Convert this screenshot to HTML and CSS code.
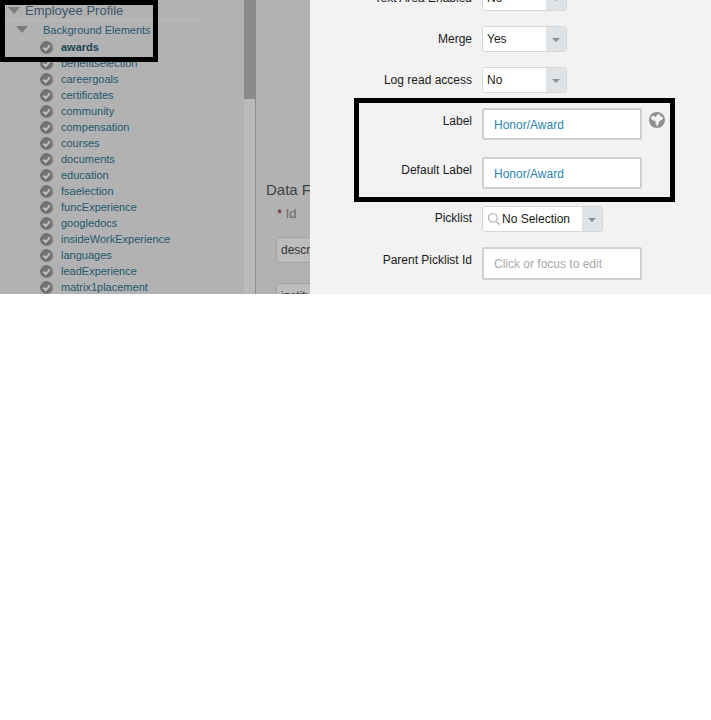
FILE: index.html
```html
<!DOCTYPE html>
<html lang="en">
<head>
    <meta charset="UTF-8">
    <title>Employee Profile</title>
    <link rel="stylesheet" href="styles.css">
</head>
<body>
    <svg class="defs" width="0" height="0">
        <symbol id="check" viewBox="0 0 14 14">
            <circle cx="7" cy="7" r="7" fill="#737373"/>
            <path d="M3.6 7.2 6.2 9.8 10.6 4.8" fill="none" stroke="#c4c4c4" stroke-width="2"/>
        </symbol>
    </svg>
    <div class="shot">
        <div class="left">
            <div class="tree">
                <div class="section">
                    <span class="tri"></span>
                    <span>Employee Profile</span>
                </div>
                <div class="group">
                    <span class="tri"></span>
                    <span>Background Elements</span>
                </div>
                <ul class="items">
                    <li class="active"><svg class="check"><use href="#check"/></svg>awards</li>
                    <li><svg class="check"><use href="#check"/></svg>benefitselection</li>
                    <li><svg class="check"><use href="#check"/></svg>careergoals</li>
                    <li><svg class="check"><use href="#check"/></svg>certificates</li>
                    <li><svg class="check"><use href="#check"/></svg>community</li>
                    <li><svg class="check"><use href="#check"/></svg>compensation</li>
                    <li><svg class="check"><use href="#check"/></svg>courses</li>
                    <li><svg class="check"><use href="#check"/></svg>documents</li>
                    <li><svg class="check"><use href="#check"/></svg>education</li>
                    <li><svg class="check"><use href="#check"/></svg>fsaelection</li>
                    <li><svg class="check"><use href="#check"/></svg>funcExperience</li>
                    <li><svg class="check"><use href="#check"/></svg>googledocs</li>
                    <li><svg class="check"><use href="#check"/></svg>insideWorkExperience</li>
                    <li><svg class="check"><use href="#check"/></svg>languages</li>
                    <li><svg class="check"><use href="#check"/></svg>leadExperience</li>
                    <li><svg class="check"><use href="#check"/></svg>matrix1placement</li>
                </ul>
            </div>
            <div class="scrollbar"><div class="thumb"></div></div>
            <div class="main">
                <h3>Data Fields</h3>
                <div class="req"><span>*</span> Id</div>
                <div class="field">description</div>
                <div class="field">institution</div>
            </div>
        </div>
        <div class="form">
            <div class="row">
                <label>Text Area Enabled</label>
                <div class="select"><span class="value">No</span><span class="arrow"></span></div>
            </div>
            <div class="row">
                <label>Merge</label>
                <div class="select"><span class="value">Yes</span><span class="arrow"></span></div>
            </div>
            <div class="row">
                <label>Log read access</label>
                <div class="select"><span class="value">No</span><span class="arrow"></span></div>
            </div>
            <div class="row row-input">
                <label>Label</label>
                <div class="input link">Honor/Award</div>
                <svg class="globe" width="18" height="18" viewBox="0 0 18 18">
                    <circle cx="9" cy="9" r="8" fill="#8f8f8f"/>
                    <path d="M2.5 7 5 4.5 8 6 9 3.5 12 3.2 12.5 5.5 15 6 14.5 8.5 11.5 10 10.5 13 9 15.2 7.5 12.5 7.5 10 4.5 9.2Z" fill="#f2f2f2"/>
                </svg>
            </div>
            <div class="row row-input">
                <label>Default Label</label>
                <div class="input link">Honor/Award</div>
            </div>
            <div class="row row-pick">
                <label>Picklist</label>
                <div class="select wide">
                    <svg class="search" width="14" height="14" viewBox="0 0 14 14">
                        <circle cx="5.8" cy="5.8" r="4.3" fill="none" stroke="#b5b5b5" stroke-width="1.2"/>
                        <path d="M9 9 12.8 12.8" stroke="#b5b5b5" stroke-width="1.6"/>
                    </svg>
                    <span class="value tight">No Selection</span><span class="arrow"></span>
                </div>
            </div>
            <div class="row row-input">
                <label>Parent Picklist Id</label>
                <div class="input hint">Click or focus to edit</div>
            </div>
        </div>
        <div class="mark mark-tree"></div>
        <div class="mark mark-form"></div>
    </div>
</body>
</html>
```

FILE: styles.css
```css
html, body {
    margin: 0;
    padding: 0;
    background: #fff;
}
body {
    font-family: "Liberation Sans", Arial, sans-serif;
}
.defs {
    display: block;
    height: 0;
}
.shot {
    position: relative;
    display: flex;
    height: 294px;
    overflow: hidden;
}

/* dimmed left side */
.left {
    display: flex;
    width: 310px;
    flex-shrink: 0;
    background: #b2b2b2;
}
.tree {
    position: relative;
    width: 244px;
    flex-shrink: 0;
    color: #23566f;
}
.section {
    display: flex;
    align-items: center;
    gap: 5px;
    height: 20px;
    margin-right: 36px;
    padding-left: 8px;
    font-size: 13px;
    color: #3d5568;
    border-bottom: 1px solid #bcbcbc;
    border-radius: 0 0 8px 0;
}
.group {
    display: flex;
    align-items: center;
    gap: 15px;
    height: 17px;
    padding-left: 16px;
    font-size: 11px;
    color: #23566f;
}
.tri {
    width: 0;
    height: 0;
    border-left: 6px solid transparent;
    border-right: 6px solid transparent;
    border-top: 7px solid #7c7c7c;
}
.items {
    list-style: none;
    margin: 1px 0 0 0;
    padding: 0 0 0 40px;
}
.items li {
    display: flex;
    align-items: center;
    gap: 8px;
    height: 16px;
    font-size: 11px;
}
.items .active {
    font-weight: bold;
    color: #1c4258;
}
.check {
    width: 13px;
    height: 13px;
    flex-shrink: 0;
}
.scrollbar {
    width: 11px;
    flex-shrink: 0;
    background: #bababa;
    border-right: 1px solid #8e8e8e;
}
.thumb {
    height: 99px;
    background: #8a8a8a;
}
.main {
    flex: 1;
    padding: 181px 0 0 10px;
    white-space: nowrap;
    overflow: hidden;
}
.main h3 {
    margin: 0;
    font-size: 15px;
    font-weight: normal;
    line-height: 17px;
    color: #3f3f3f;
}
.req {
    margin: 9px 0 0 11px;
    font-size: 13px;
    line-height: 14px;
    color: #666;
}
.req span {
    color: #6b1f1f;
}
.field {
    width: 120px;
    height: 24px;
    margin: 16px 0 20px 10px;
    padding-left: 4px;
    font-size: 12px;
    line-height: 24px;
    color: #333;
    background: #bdbdbd;
    border: 1px solid #a2a2a2;
    border-radius: 3px;
}

/* form on the right */
.form {
    flex: 1;
    height: 309px;
    margin-top: -15px;
    background: #f2f2f2;
}
.row {
    display: flex;
    align-items: flex-start;
    margin-bottom: 15px;
}
.row-input {
    margin-bottom: 17px;
}
.row label {
    width: 162px;
    margin-right: 10px;
    padding-top: 1px;
    font-size: 12px;
    line-height: 25px;
    text-align: right;
    color: #1a1a1a;
    flex-shrink: 0;
}
.row-input label {
    line-height: 24px;
}
.row-pick label {
    padding-top: 0;
    line-height: 24px;
}
.select {
    display: flex;
    align-items: center;
    width: 83px;
    height: 24px;
    font-size: 12px;
    color: #1a1a1a;
    background: #fff;
    border: 1px solid #d3d7da;
    border-radius: 3px;
}
.select.wide {
    width: 119px;
}
.value {
    flex: 1;
    padding-left: 4px;
}
.value.tight {
    padding-left: 1px;
}
.search {
    margin-left: 4px;
    flex-shrink: 0;
}
.arrow {
    position: relative;
    width: 20px;
    height: 24px;
    background: #dfe3e5;
    flex-shrink: 0;
}
.arrow::after {
    content: "";
    position: absolute;
    left: 6px;
    top: 11px;
    border-left: 4px solid transparent;
    border-right: 4px solid transparent;
    border-top: 4px solid #8a8f92;
}
.input {
    width: 146px;
    height: 28px;
    padding-left: 10px;
    font-size: 12px;
    line-height: 30px;
    background: #fff;
    border: 2px solid #d0d0d0;
    border-radius: 2px;
}
.link {
    color: #2a85ad;
}
.hint {
    height: 29px;
    color: #a9a9a9;
}
.globe {
    margin: 3px 0 0 6px;
    flex-shrink: 0;
}

/* black highlight boxes drawn on top of the shot */
.mark {
    position: absolute;
    box-sizing: border-box;
    border: 5px solid #000;
}
.mark-tree {
    left: 0;
    top: 0;
    width: 158px;
    height: 62px;
}
.mark-form {
    left: 354px;
    top: 98px;
    width: 321px;
    height: 104px;
}
```
